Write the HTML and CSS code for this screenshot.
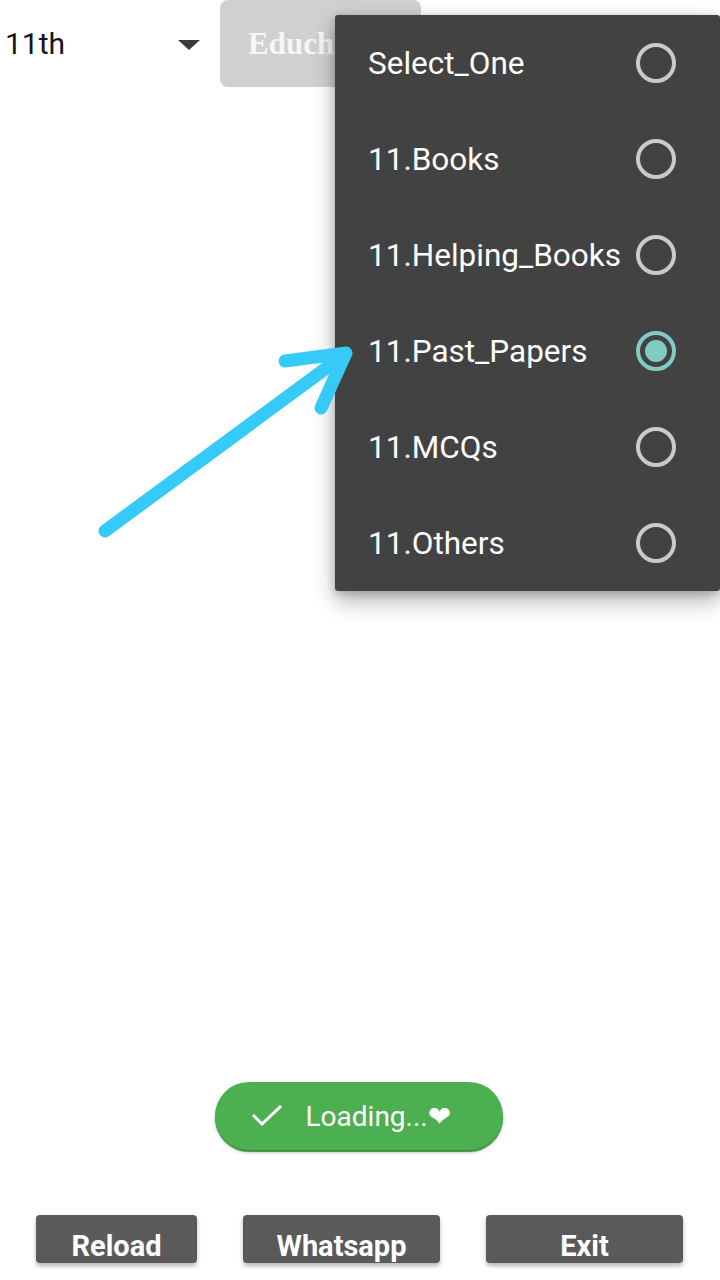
FILE: index.html
```html
<!doctype html>
<html lang="en">
  <head>
    <meta charset="UTF-8" />
    <meta name="viewport" content="width=device-width, initial-scale=1.0" />
    <title>11th</title>
    <link rel="stylesheet" href="styles.css">
  </head>
  <body>
    <div class="top-bar">
      <div class="spinner">
        <span class="spinner-text">11th</span>
        <span class="spinner-caret"></span>
      </div>
      <div class="educ-button">Educhub</div>
    </div>

    <div class="spacer"></div>

    <div class="toast">
      <svg class="toast-check" width="30" height="22" viewBox="0 0 30 22">
        <polyline points="2,11 10,19 28,2" fill="none" stroke="white" stroke-width="3" stroke-linecap="square" />
      </svg>
      <span class="toast-text">Loading...<span class="heart">❤</span></span>
    </div>

    <div class="bottom-bar">
      <div class="action-button reload">Reload</div>
      <div class="action-button">Whatsapp</div>
      <div class="action-button">Exit</div>
    </div>

    <!-- popup list over the page -->
    <ul class="choice-menu">
      <li class="choice"><span>Select_One</span><span class="radio"></span></li>
      <li class="choice"><span>11.Books</span><span class="radio"></span></li>
      <li class="choice"><span>11.Helping_Books</span><span class="radio"></span></li>
      <li class="choice"><span>11.Past_Papers</span><span class="radio checked"></span></li>
      <li class="choice"><span>11.MCQs</span><span class="radio"></span></li>
      <li class="choice"><span>11.Others</span><span class="radio"></span></li>
    </ul>

    <!-- annotation arrow -->
    <svg class="pointer-arrow" width="720" height="620" viewBox="0 0 720 620">
      <g fill="none" stroke="#35caf8" stroke-width="13" stroke-linecap="round" stroke-linejoin="round">
        <line x1="105" y1="531" x2="344" y2="355" />
        <polyline points="285,361 346,353 321,408" />
      </g>
    </svg>
  </body>
</html>
```

FILE: styles.css
```css
:root {
  --menu-back: #424242;
  --radio-off: #c9c9c9;
  --radio-on: #80cbc4;
  --toast-green: #4caf50;
  --button-grey: #5a5a5b;
}
body {
  margin: 0;
  padding: 0;
  width: 720px;
  height: 1280px;
  display: flex;
  flex-direction: column;
  background-color: white;
  font-family: Roboto, "Noto Sans", sans-serif;
  position: relative;
  overflow: hidden;
}

.top-bar {
  display: flex;
  height: 87px;
}
.spinner {
  width: 220px;
  display: flex;
  align-items: center;
  justify-content: space-between;
  padding: 0 20px 0 5px;
  box-sizing: border-box;
}
.spinner-text {
  font-size: 30px;
  color: #161616;
}
.spinner-caret {
  width: 0;
  height: 0;
  border-left: 11px solid transparent;
  border-right: 11px solid transparent;
  border-top: 10px solid #3c3c3c;
  margin-top: 2px;
}
.educ-button {
  width: 201px;
  background-color: #d0d0d0;
  border-radius: 8px;
  color: #f6f6f6;
  font-family: "Liberation Serif", serif;
  font-weight: bold;
  font-size: 31px;
  padding-left: 28px;
  box-sizing: border-box;
  display: flex;
  align-items: center;
}

.spacer {
  flex: 1;
}

.toast {
  align-self: center;
  margin-right: 3px;
  width: 288px;
  height: 68px;
  box-sizing: border-box;
  border-radius: 34px;
  background-color: var(--toast-green);
  box-shadow: 0 2px 1px #3a8f3d, 0 3px 4px rgba(0, 0, 0, 0.15);
  display: flex;
  align-items: center;
  padding-left: 37px;
  gap: 24px;
  color: white;
  margin-bottom: 65px;
}
.toast-text {
  font-size: 28px;
}
.heart {
  font-family: "DejaVu Sans", sans-serif;
  font-size: 28px;
}

.bottom-bar {
  display: flex;
  gap: 46px;
  padding: 0 36px;
  margin-bottom: 17px;
}
.action-button {
  width: 197px;
  height: 48px;
  box-sizing: border-box;
  background-color: var(--button-grey);
  border-radius: 4px;
  box-shadow: 0 3px 4px rgba(0, 0, 0, 0.28);
  color: white;
  font-weight: bold;
  font-size: 29px;
  line-height: 34px;
  padding-top: 14px;
  text-align: center;
  overflow: hidden;
}
.action-button.reload {
  width: 161px;
}

.choice-menu {
  position: absolute;
  left: 335px;
  top: 15px;
  width: 385px;
  margin: 0;
  padding: 0;
  list-style: none;
  background-color: var(--menu-back);
  border-radius: 3px;
  box-shadow: 0 10px 22px rgba(0, 0, 0, 0.3), 0 2px 8px rgba(0, 0, 0, 0.2);
}
.choice {
  height: 96px;
  display: flex;
  align-items: center;
  justify-content: space-between;
  padding: 0 44px 0 33px;
  font-size: 31.5px;
  color: white;
}
.radio {
  width: 40px;
  height: 40px;
  box-sizing: border-box;
  border: 4px solid var(--radio-off);
  border-radius: 50%;
  display: flex;
  align-items: center;
  justify-content: center;
}
.radio.checked {
  border-color: var(--radio-on);
}
.radio.checked::after {
  content: "";
  width: 22px;
  height: 22px;
  border-radius: 50%;
  background-color: var(--radio-on);
}

.pointer-arrow {
  position: absolute;
  left: 0;
  top: 0;
  pointer-events: none;
}
```
